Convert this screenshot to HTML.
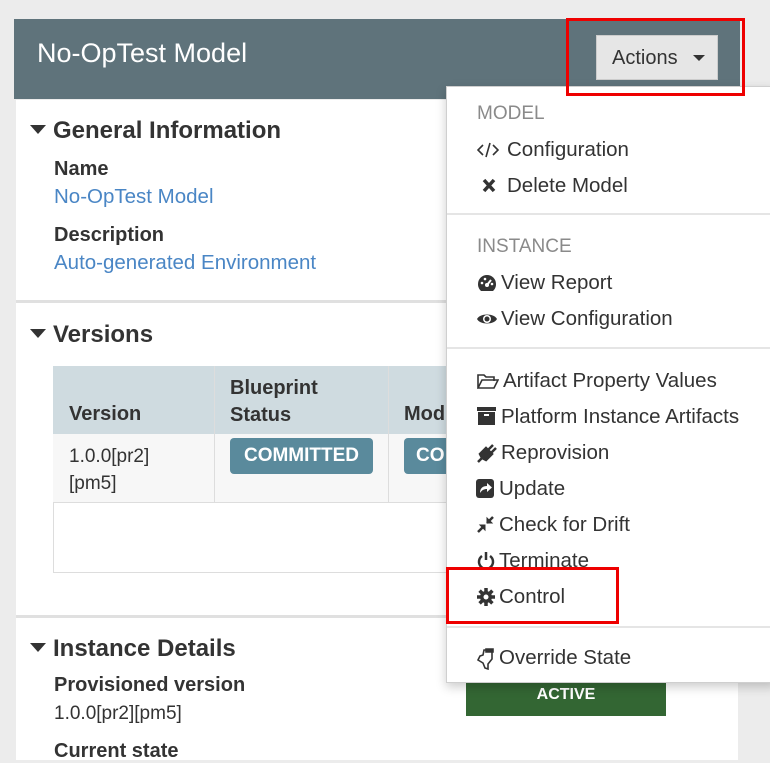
<!DOCTYPE html>
<html><head><meta charset="utf-8"><style>
*{margin:0;padding:0;box-sizing:border-box}
body{width:770px;height:746px;overflow:hidden;background:#ececec;font-family:"Liberation Sans",sans-serif;color:#333;position:relative}
.a{position:absolute;white-space:nowrap}
.hdr{left:14px;top:19px;width:726px;height:80px;background:#5f737b}
.panel{left:16px;top:100px;width:722px;height:660px;background:#fff}
.sep{left:16px;width:722px;height:3px;background:#e0e0e0}
h2{font-size:24px;font-weight:bold;color:#333}
.tri{display:inline-block;width:0;height:0;border-left:8px solid transparent;border-right:8px solid transparent;border-top:9px solid #333;margin-right:7px;vertical-align:4px}
.lbl{font-size:20px;font-weight:bold;color:#333}
.lnk{font-size:20.5px;color:#4a86c5}
.val{font-size:19px;color:#333}
.dd{left:446px;top:86px;width:330px;height:597px;background:#fff;border:1px solid #cfcfcf;box-shadow:0 4px 10px rgba(0,0,0,.2)}
.it{font-size:20.5px;color:#333}
.gh{left:477px;font-size:19px;color:#8a8a8a}
.dv{left:447px;width:323px;height:2px;background:#e5e5e5}
.red{border:3px solid #ee0000}
svg.i{position:absolute}
</style></head><body>
<div class="a hdr"></div>
<div class="a" style="left:37px;top:38px;font-size:27px;color:#fff">No-OpTest Model</div>
<div class="a" style="left:596px;top:35px;width:122px;height:45px;background:#e6e6e6;border:1px solid #ccc;font-size:20px;color:#333;line-height:45px;padding-left:15px">Actions <span style="display:inline-block;border-left:6px solid transparent;border-right:6px solid transparent;border-top:6px solid #333;vertical-align:3px;margin-left:10px"></span></div>
<div class="a panel"></div>
<div class="a" style="left:30px;top:117px"><h2><span class="tri"></span>General Information</h2></div>
<div class="a lbl" style="left:54px;top:158px">Name</div>
<div class="a lnk" style="left:54px;top:185px">No-OpTest Model</div>
<div class="a lbl" style="left:54px;top:224px">Description</div>
<div class="a lnk" style="left:54px;top:251px">Auto-generated Environment</div>
<div class="a sep" style="top:300px"></div>
<div class="a" style="left:30px;top:321px"><h2><span class="tri"></span>Versions</h2></div>
<div class="a" style="left:53px;top:366px;width:420px;height:207px;border:1px solid #ddd;background:#fff"></div>
<div class="a" style="left:53px;top:366px;width:420px;height:68px;background:#cfdbe0"></div>
<div class="a" style="left:53px;top:434px;width:420px;height:69px;background:#f7f7f7;border-bottom:1px solid #ddd"></div>
<div class="a" style="left:214px;top:366px;width:1px;height:137px;background:#ddd"></div>
<div class="a" style="left:388px;top:366px;width:1px;height:137px;background:#ddd"></div>
<div class="a lbl" style="left:69px;top:403px">Version</div>
<div class="a lbl" style="left:230px;top:375px;line-height:27px;white-space:normal">Blueprint<br>Status</div>
<div class="a lbl" style="left:404px;top:403px">Mod</div>
<div class="a val" style="left:69px;top:443px;line-height:27px;white-space:normal">1.0.0[pr2]<br>[pm5]</div>
<div class="a" style="left:230px;top:438px;width:143px;height:36px;background:#5a8a9c;border-radius:4px;color:#fff;font-weight:bold;font-size:19px;line-height:36px;text-align:center">COMMITTED</div>
<div class="a" style="left:404px;top:438px;width:60px;height:36px;background:#5a8a9c;border-radius:4px;color:#fff;font-weight:bold;font-size:19px;line-height:36px;padding-left:12px;overflow:hidden">CO</div>
<div class="a sep" style="top:615px"></div>
<div class="a" style="left:30px;top:635px"><h2><span class="tri"></span>Instance Details</h2></div>
<div class="a lbl" style="left:54px;top:674px">Provisioned version</div>
<div class="a val" style="left:54px;top:703px">1.0.0[pr2][pm5]</div>
<div class="a lbl" style="left:54px;top:740px">Current state</div>
<div class="a" style="left:466px;top:682px;width:200px;height:34px;background:#336633;color:#fff;font-weight:bold;font-size:16px;line-height:26px;text-align:center">ACTIVE</div>
<div class="a dd"></div>
<div class="a gh" style="top:103px">MODEL</div>
<svg class="i" style="left:477px;top:141px" width="22" height="18" viewBox="0 0 22 18" fill="none" stroke="#333" stroke-width="1.6"><path d="M6 4L1 9l5 5M16 4l5 5-5 5M13 2L9 16"/></svg>
<div class="a it" style="left:507px;top:138px">Configuration</div>
<svg class="i" style="left:482px;top:178px" width="14" height="15" viewBox="0 0 14 15" stroke="#333" stroke-width="3.5"><path d="M2 2l10 11M12 2L2 13"/></svg>
<div class="a it" style="left:507px;top:174px">Delete Model</div>
<div class="a dv" style="top:213px"></div>
<div class="a gh" style="top:236px">INSTANCE</div>
<svg class="i" style="left:477px;top:274px" width="20" height="18" viewBox="0 0 20 18"><path d="M10 1a9 9 0 0 0-9 9c0 3 1 5 3 7h12c2-2 3-4 3-7a9 9 0 0 0-9-9z" fill="#333"/><circle cx="10" cy="11" r="2" fill="#fff"/><path d="M10 11l4-5" stroke="#fff" stroke-width="2"/><circle cx="5" cy="9" r="1.3" fill="#fff"/><circle cx="8" cy="5" r="1.3" fill="#fff"/><circle cx="15" cy="10" r="1.3" fill="#fff"/></svg>
<div class="a it" style="left:501px;top:271px">View Report</div>
<svg class="i" style="left:477px;top:311px" width="20" height="16" viewBox="0 0 20 16"><path d="M0 8C3 2 17 2 20 8C17 14 3 14 0 8z" fill="#333"/><circle cx="10" cy="8" r="4" fill="#fff"/><circle cx="10" cy="8" r="2.5" fill="#333"/></svg>
<div class="a it" style="left:501px;top:307px">View Configuration</div>
<div class="a dv" style="top:347px"></div>
<svg class="i" style="left:477px;top:373px" width="22" height="17" viewBox="0 0 22 17" fill="none" stroke="#333" stroke-width="1.6"><path d="M1 15V2h6l2 2h8v4M1 15l4-8h16l-4 8z"/></svg>
<div class="a it" style="left:503px;top:369px">Artifact Property Values</div>
<svg class="i" style="left:477px;top:407px" width="19" height="18" viewBox="0 0 19 18"><rect x="0" y="0" width="19" height="4" fill="#333"/><rect x="1" y="5" width="17" height="13" fill="#333"/><rect x="7" y="7" width="5" height="2" fill="#fff"/></svg>
<div class="a it" style="left:501px;top:405px">Platform Instance Artifacts</div>
<svg class="i" style="left:477px;top:443px" width="20" height="20" viewBox="0 0 20 20"><path d="M1 19l4-4M5 15l-2-4 6-6 6 6-6 6z" stroke="#333" stroke-width="2.5" fill="#333"/><path d="M11 7l5-5M14 10l5-5" stroke="#333" stroke-width="2.5"/></svg>
<div class="a it" style="left:501px;top:441px">Reprovision</div>
<svg class="i" style="left:476px;top:479px" width="18" height="19" viewBox="0 0 18 19"><rect x="0" y="0" width="18" height="19" rx="3" fill="#333"/><path d="M4 14c0-5 3-7 7-7V4l5 4.5-5 4.5V10c-3 0-5 1-7 4z" fill="#fff"/></svg>
<div class="a it" style="left:499px;top:477px">Update</div>
<svg class="i" style="left:477px;top:515px" width="18" height="18" viewBox="0 0 18 18" stroke="#333" stroke-width="2.5"><path d="M1 17l6-6M10 8l6-6"/><path d="M3 10h5v5zM10 3v5h5z" fill="#333" stroke-width="1"/></svg>
<div class="a it" style="left:499px;top:513px">Check for Drift</div>
<svg class="i" style="left:477px;top:551px" width="18" height="19" viewBox="0 0 18 19" fill="none" stroke="#333" stroke-width="2.5"><path d="M5 5a7 7 0 1 0 8 0M9 1v8"/></svg>
<div class="a it" style="left:499px;top:549px">Terminate</div>
<svg class="i" style="left:477px;top:588px" width="18" height="18" viewBox="0 0 18 18"><circle cx="9" cy="9" r="6" fill="#333"/><g stroke="#333" stroke-width="3.5"><path d="M9 0v18M0 9h18M2.6 2.6l12.8 12.8M15.4 2.6L2.6 15.4"/></g><circle cx="9" cy="9" r="2.5" fill="#fff"/></svg>
<div class="a it" style="left:499px;top:585px">Control</div>
<div class="a dv" style="top:626px"></div>
<svg class="i" style="left:476px;top:648px" width="20" height="22" viewBox="0 0 20 22" fill="none" stroke="#333" stroke-width="1.6"><path d="M8 2h8v9l-4 5v5l-3-1-2-5-5-3 2-4 3-1z"/><path d="M10 1h7v3h-7z" fill="#333"/></svg>
<div class="a it" style="left:499px;top:646px">Override State</div>
<div class="a red" style="left:566px;top:18px;width:179px;height:78px"></div>
<div class="a red" style="left:446px;top:567px;width:173px;height:57px"></div>
</body></html>
